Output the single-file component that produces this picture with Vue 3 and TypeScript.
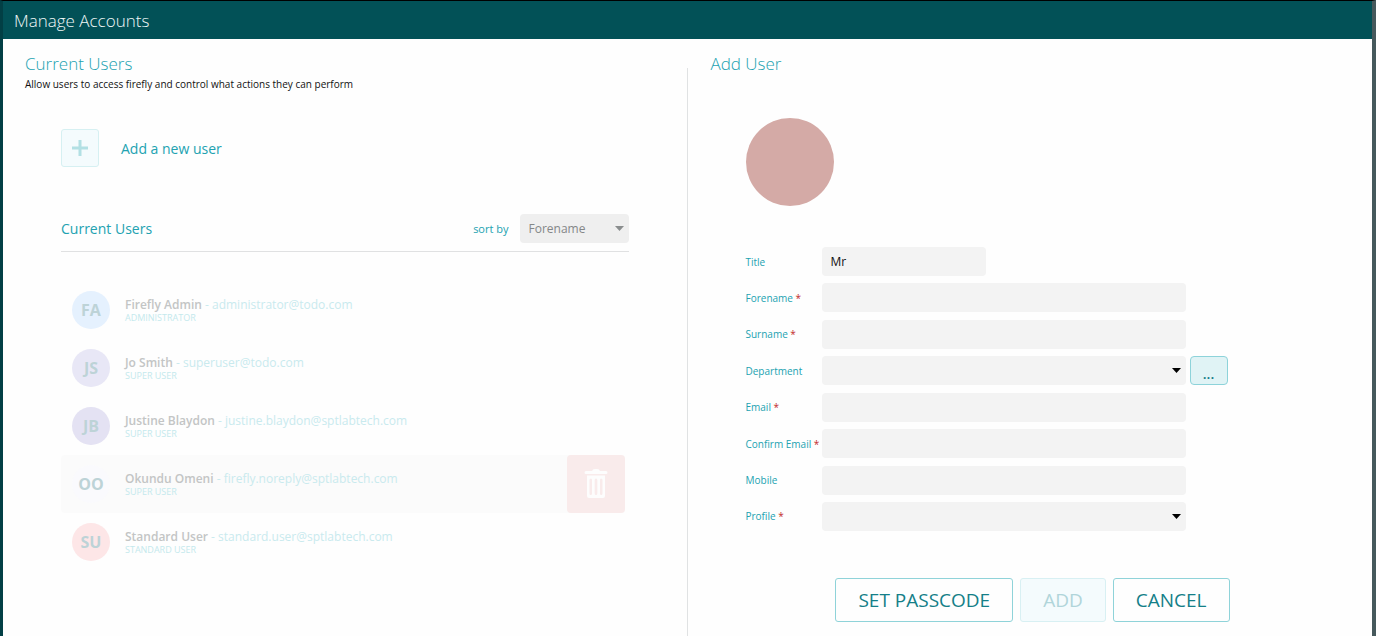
<script setup lang="ts">
import { ref } from 'vue'

interface User {
  initials: string
  name: string
  email: string
  role: string
  tone: string
  selected?: boolean
}

interface Field {
  id: string
  label: string
  kind: 'text' | 'select'
  type?: string
  required?: boolean
  short?: boolean
  more?: boolean
}

const users: User[] = [
  { initials: 'FA', name: 'Firefly Admin', email: 'administrator@todo.com', role: 'ADMINISTRATOR', tone: 'blue' },
  { initials: 'JS', name: 'Jo Smith', email: 'superuser@todo.com', role: 'SUPER USER', tone: 'lilac' },
  { initials: 'JB', name: 'Justine Blaydon', email: 'justine.blaydon@sptlabtech.com', role: 'SUPER USER', tone: 'violet' },
  { initials: 'OO', name: 'Okundu Omeni', email: 'firefly.noreply@sptlabtech.com', role: 'SUPER USER', tone: 'pale', selected: true },
  { initials: 'SU', name: 'Standard User', email: 'standard.user@sptlabtech.com', role: 'STANDARD USER', tone: 'rose' },
]

const fields: Field[] = [
  { id: 'title', label: 'Title', kind: 'text', short: true },
  { id: 'forename', label: 'Forename', kind: 'text', required: true },
  { id: 'surname', label: 'Surname', kind: 'text', required: true },
  { id: 'department', label: 'Department', kind: 'select', more: true },
  { id: 'email', label: 'Email', kind: 'text', type: 'email', required: true },
  { id: 'confirm-email', label: 'Confirm Email', kind: 'text', type: 'email', required: true },
  { id: 'mobile', label: 'Mobile', kind: 'text', type: 'tel' },
  { id: 'profile', label: 'Profile', kind: 'select', required: true },
]

const sortBy = ref('Forename')
const values = ref<Record<string, string>>({ title: 'Mr' })
</script>

<template>
  <div class="window">
    <header class="bar"><h1>Manage Accounts</h1></header>
    <main class="panels">
      <section class="panel">
        <h2>Current Users</h2>
        <p class="intro">Allow users to access firefly and control what actions they can perform</p>
        <div class="content">
          <div class="new-user">
            <button id="new-user" type="button" class="plus" aria-label="Add a new user">
              <svg viewBox="0 0 16 16" width="16" height="16"><path d="M8 0v16M0 8h16" stroke="#b2e0e4" stroke-width="3" /></svg>
            </button>
            <label for="new-user">Add a new user</label>
          </div>
          <div class="list-head">
            <h3>Current Users</h3>
            <label for="sort">sort by</label>
            <div class="pick sort">
              <select id="sort" v-model="sortBy">
                <option>Forename</option>
                <option>Surname</option>
              </select>
              <svg class="arrow" viewBox="0 0 9 5" width="9" height="5"><path d="M0 0h9L4.500 5z" fill="#8a8d8e" /></svg>
            </div>
          </div>
          <ul class="users">
            <li v-for="u in users" :key="u.initials" class="user" :class="{ selected: u.selected }">
              <span class="avatar" :class="u.tone">{{ u.initials }}</span>
              <div class="info">
                <div class="who"><strong>{{ u.name }}</strong> - <span>{{ u.email }}</span></div>
                <div class="role">{{ u.role }}</div>
              </div>
              <button v-if="u.selected" type="button" class="delete" aria-label="Delete user">
                <svg viewBox="0 0 24 30" width="24" height="30" fill="#fdfdfd">
                  <path fill-rule="evenodd" d="M2 2H8Q8.500 0 11 0H13Q15.500 0 16 2H22Q23.500 2 23.500 3.500T22 5H2Q.5 5 .5 3.500T2 2ZM3 6.500H21V27Q21 29 19 29H5Q3 29 3 27ZM7 9.500Q5.500 9.500 5.500 11V24.500Q5.500 26 6.800 26T8 24.500V11Q8 9.500 7 9.500ZM12 9.500Q10.700 9.500 10.700 11V24.500Q10.700 26 12 26T13.300 24.500V11Q13.300 9.500 12 9.500ZM17 9.500Q16 9.500 16 11V24.500Q16 26 17.200 26T18.500 24.500V11Q18.500 9.500 17 9.500Z" />
                </svg>
              </button>
            </li>
          </ul>
        </div>
      </section>

      <section class="panel add">
        <h2>Add User</h2>
        <form class="form" @submit.prevent>
          <div class="photo"></div>
          <div class="fields">
            <div v-for="f in fields" :key="f.id" class="field">
              <label :for="f.id">{{ f.label }}<i v-if="f.required"> *</i></label>
              <div v-if="f.kind === 'select'" class="pick">
                <select :id="f.id" v-model="values[f.id]"></select>
                <svg class="arrow" viewBox="0 0 9 5" width="9" height="5"><path d="M0 0h9L4.500 5z" fill="#000" /></svg>
              </div>
              <input v-else :id="f.id" v-model="values[f.id]" :type="f.type ?? 'text'" :class="{ short: f.short }" />
              <button v-if="f.more" type="button" class="more" aria-label="Edit departments">...</button>
            </div>
          </div>
          <div class="actions">
            <button type="button">SET PASSCODE</button>
            <button type="submit" disabled>ADD</button>
            <button type="button">CANCEL</button>
          </div>
        </form>
      </section>
    </main>
  </div>
</template>

<style>
body {
  margin: 0;
}
</style>

<style scoped>
* {
  box-sizing: border-box;
}
.window {
  display: flex;
  flex-direction: column;
  min-height: 100vh;
  background: #fefefe;
  border-top: 1px solid #000;
  border-left: 3px solid #023f45;
  border-right: 4px solid #46595c;
  font-family: 'Open Sans', 'Noto Sans', sans-serif;
  color: #22a2b1;
}
h1, h2, h3, p, ul {
  margin: 0;
  padding: 0;
  font-weight: 400;
}
button, input, select {
  font-family: inherit;
  margin: 0;
}
.bar {
  display: flex;
  align-items: center;
  height: 38px;
  padding: 2px 11px 0;
  background: #025157;
}
h1 {
  font-size: 17px;
  line-height: 24px;
  font-weight: 300;
  color: #f0f8f8;
}
.panels {
  flex: 1;
  display: flex;
}
.panel {
  flex: 1;
  min-width: 0;
  padding: 15px 0 0 22px;
}
.add {
  position: relative;
  padding-left: 24px;
}
.add::before {
  content: '';
  position: absolute;
  left: 0;
  top: 29px;
  bottom: 0;
  width: 1px;
  background: #e0e2e3;
}
h2 {
  font-size: 17px;
  line-height: 20px;
  font-weight: 300;
}
.intro {
  margin-top: 2px;
  font-size: 10px;
  line-height: 16px;
  color: #111;
}
.content {
  padding: 37px 58px 0 36px;
}
.new-user {
  display: flex;
  align-items: center;
  gap: 22px;
  font-size: 14px;
}
.plus {
  display: grid;
  place-items: center;
  width: 38px;
  height: 38px;
  padding: 0;
  border: 1px solid #d6f0f2;
  border-radius: 3px;
  background: #f4fbfd;
}
.list-head {
  display: flex;
  align-items: center;
  margin-top: 47px;
  padding-bottom: 8px;
  border-bottom: 1px solid #e0e1e2;
}
h3 {
  flex: 1;
  font-size: 14px;
  line-height: 20px;
}
.list-head label {
  margin-right: 11px;
  font-size: 11px;
}
.pick {
  position: relative;
  width: 364px;
}
.pick.sort {
  width: 109px;
}
.arrow {
  position: absolute;
  right: 5px;
  top: 12px;
  pointer-events: none;
}
select, input {
  display: block;
  width: 364px;
  height: 29px;
  padding: 0 9px;
  border: 0;
  border-radius: 4px;
  background: #f3f3f3;
  font-size: 12px;
  color: #111;
  appearance: none;
}
.pick select {
  width: 100%;
}
.sort select {
  background: #efefef;
  color: #848788;
}
.users {
  margin: 29px 4px 0 0;
  list-style: none;
}
.user {
  display: flex;
  align-items: center;
  height: 58px;
  padding-left: 11px;
  border-radius: 4px;
}
.selected {
  background: #fbfbfb;
}
.avatar {
  display: grid;
  place-items: center;
  width: 38px;
  height: 38px;
  margin-right: 15px;
  border-radius: 50%;
  font-size: 16px;
  font-weight: 700;
  color: #bdd3d7;
}
.blue { background: #e5f1fe; }
.lilac { background: #e8e7f6; }
.violet { background: #e4e2f3; }
.pale { background: #fafafd; }
.rose { background: #fde6e7; }
.info {
  flex: 1;
}
.who {
  font-size: 12px;
  line-height: 16px;
  color: #c9eaee;
}
.who strong {
  font-weight: 600;
  color: #c3c5c5;
}
.role {
  font-size: 9px;
  line-height: 10px;
  color: #c4e9ed;
}
.delete {
  display: grid;
  place-items: center;
  width: 58px;
  height: 58px;
  padding: 0;
  border: 0;
  border-radius: 4px;
  background: #f9ebeb;
}
.form {
  max-width: 484px;
  margin: 44px 0 0 35px;
}
.photo {
  width: 88px;
  height: 88px;
  border-radius: 50%;
  background: #d4aaa6;
}
.fields {
  display: flex;
  flex-direction: column;
  justify-content: space-between;
  min-height: 284px;
  margin-top: 41px;
}
.field {
  display: flex;
  align-items: center;
}
.field label {
  width: 76px;
  font-size: 10px;
  line-height: 14px;
  white-space: nowrap;
}
.field i {
  font-style: normal;
  color: #c22a2a;
}
input.short {
  width: 164px;
}
.more {
  width: 38px;
  height: 29px;
  margin-left: 4px;
  padding: 6px 0 0;
  border: 1px solid #8dd3da;
  border-radius: 4px;
  background: #e0f3f5;
  font-size: 14px;
  font-weight: 600;
  line-height: 20px;
  color: #137d87;
}
.actions {
  display: flex;
  justify-content: flex-end;
  gap: 7px;
  margin-top: 47px;
}
.actions button {
  height: 44px;
  padding: 0 22px;
  border: 1px solid #8fd3d9;
  border-radius: 3px;
  background: #fefefe;
  font-size: 19px;
  color: #147f88;
  white-space: nowrap;
}
.actions button:disabled {
  border-color: #d8f0f3;
  background: #f4fbfd;
  color: #b0d5da;
}
</style>
